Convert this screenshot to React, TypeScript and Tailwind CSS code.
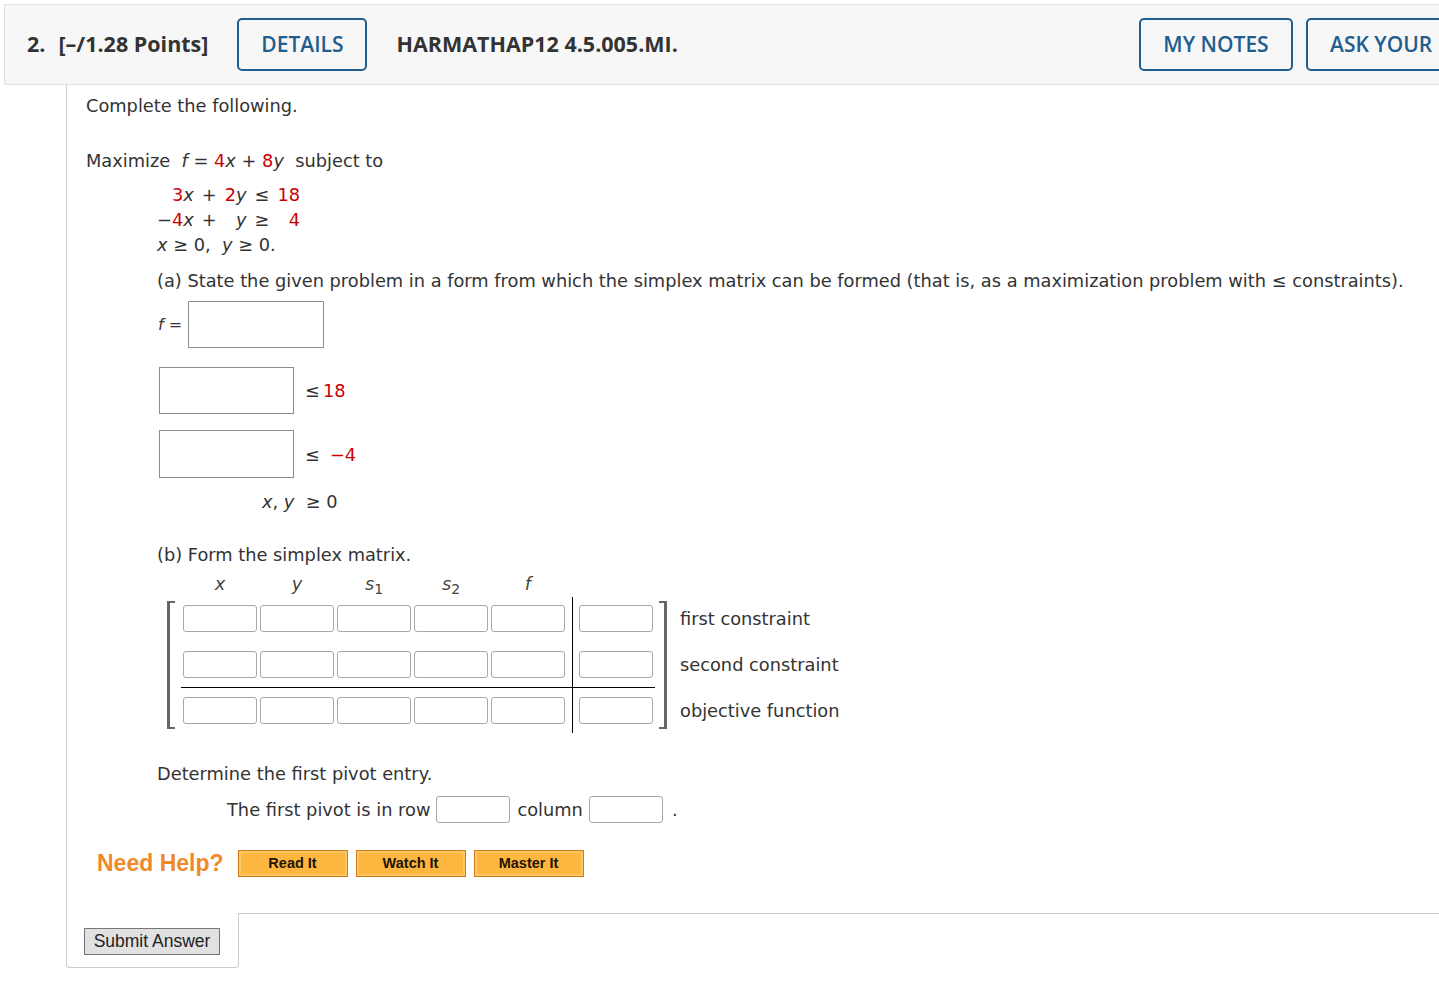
const Num = ({ children }: { children: React.ReactNode }) => (
  <span className="text-[#cc0000]">{children}</span>
);

const V = ({ children }: { children: React.ReactNode }) => (
  <i className="italic">{children}</i>
);

const Box = ({ w = 135, h = 46 }: { w?: number; h?: number }) => (
  <div
    className="border border-[#8c8c8c] bg-white"
    style={{ width: w, height: h }}
  />
);

const Cell = () => (
  <div className="w-[74px] h-[27px] border border-[#a8a8a8] rounded-[3px] bg-white" />
);

const Row = () => (
  <div className="flex gap-[3px]">
    <Cell />
    <Cell />
    <Cell />
    <Cell />
    <Cell />
  </div>
);

const HeaderButton = ({ label, className }: { label: string; className: string }) => (
  <div
    className={
      "h-[53px] flex items-center border-2 border-[#1f5e8e] rounded-[5px] text-[#1f5e8e] text-[21px] font-semibold " +
      className
    }
  >
    {label}
  </div>
);

const HelpButton = ({ label }: { label: string }) => (
  <div className="w-[110px] h-[27px] flex items-center justify-center bg-[#fdb640] border border-[#d07a1a] shadow-[inset_0_0_0_2px_#fcc763] text-[14.5px] font-bold text-[#1f1400]">
    {label}
  </div>
);

export default function App() {
  return (
    <div className="w-[1439px] h-[984px] overflow-hidden bg-white">
      {/* question header */}
      <div className="ml-[4px] mt-[4px] w-[1547px] h-[81px] bg-[#f7f7f7] border border-[#e0e0e0] flex items-center pl-[22px] pr-[14px] font-['Open_Sans',sans-serif] text-[#333]">
        <span className="text-[21.5px] font-bold">2.</span>
        <span className="ml-[13px] text-[21.5px] font-bold">[–/1.28 Points]</span>
        <HeaderButton label="DETAILS" className="ml-[29px] w-[130px] justify-center" />
        <span className="ml-[29px] text-[21.5px] font-bold">HARMATHAP12 4.5.005.MI.</span>
        <div className="ml-auto flex gap-[13px]">
          <HeaderButton label="MY NOTES" className="w-[154px] justify-center" />
          <HeaderButton label="ASK YOUR" className="w-[230px] justify-start pl-[22px]" />
        </div>
      </div>

      {/* question body */}
      <div className="ml-[66px] border-l border-[#cccccc] pl-[19px] pt-[8px] font-['DejaVu_Sans',Verdana,sans-serif] text-[17.8px] leading-[25px] text-[#333]">
        <p>Complete the following.</p>

        <p className="mt-[30px]">
          Maximize&nbsp; <V>f</V> = <Num>4</Num>
          <V>x</V> + <Num>8</Num>
          <V>y</V>&nbsp; subject to
        </p>

        <div className="ml-[71px] mt-[9px]">
          <div className="inline-grid grid-cols-[auto_auto_auto_auto_auto] gap-x-[8px] justify-items-end">
            <span>
              <Num>3</Num>
              <V>x</V>
            </span>
            <span>+</span>
            <span>
              <Num>2</Num>
              <V>y</V>
            </span>
            <span>≤</span>
            <Num>18</Num>

            <span>
              −<Num>4</Num>
              <V>x</V>
            </span>
            <span>+</span>
            <V>y</V>
            <span>≥</span>
            <Num>4</Num>

            <span className="col-span-5 justify-self-start">
              <V>x</V> ≥ 0,&nbsp; <V>y</V> ≥ 0.
            </span>
          </div>

          <p className="mt-[11px]">
            (a) State the given problem in a form from which the simplex matrix can be formed (that is, as a
            maximization problem with ≤ constraints).
          </p>

          <div className="mt-[8px] flex items-center">
            <span className="ml-[1px] text-[16px]">
              <V>f</V> =
            </span>
            <div className="ml-[6px]">
              <Box w={136} h={47} />
            </div>
          </div>

          <div className="ml-[2px] mt-[19px] flex items-center">
            <Box w={135} h={47} />
            <span className="ml-[11px]">
              ≤<span className="ml-[3px]"><Num>18</Num></span>
            </span>
          </div>

          <div className="ml-[2px] mt-[16px] flex items-center">
            <Box w={135} h={48} />
            <span className="ml-[11px]">
              ≤<span className="ml-[10px]"><Num>−4</Num></span>
            </span>
          </div>

          <p className="ml-[105px] mt-[11px]">
            <V>x</V>, <V>y</V>&nbsp; ≥ 0
          </p>

          <p className="mt-[28px]">(b) Form the simplex matrix.</p>

          {/* column labels */}
          <div className="ml-[26px] mt-[4px] grid grid-cols-[repeat(5,74px)] gap-x-[3px] h-[26px] leading-[26px] text-[#444]">
            <span className="text-center">
              <V>x</V>
            </span>
            <span className="text-center">
              <V>y</V>
            </span>
            <span className="text-center">
              <V>s</V>
              <span className="text-[14px] relative top-[4px]">1</span>
            </span>
            <span className="text-center">
              <V>s</V>
              <span className="text-[14px] relative top-[4px]">2</span>
            </span>
            <span className="text-center">
              <V>f</V>
            </span>
          </div>

          {/* simplex matrix */}
          <div className="ml-[10px] flex items-center">
            <div className="w-[8px] h-[128px] border-l-[3px] border-y-2 border-[#666]" />
            <div className="ml-[6px] flex">
              <div className="pl-[2px] pr-[7px] pt-[8px] pb-[9px] flex flex-col">
                <Row />
                <div className="mt-[19px]">
                  <Row />
                </div>
                <div className="mt-[9px] -ml-[2px] -mr-[7px] pl-[2px] pr-[7px] pt-[9px] border-t border-black">
                  <Row />
                </div>
              </div>
              <div className="border-l border-black pl-[6px] pr-[2px] pt-[8px] pb-[9px] flex flex-col">
                <Cell />
                <div className="mt-[19px]">
                  <Cell />
                </div>
                <div className="mt-[9px] -ml-[6px] -mr-[2px] pl-[6px] pr-[2px] pt-[9px] border-t border-black">
                  <Cell />
                </div>
              </div>
            </div>
            <div className="ml-[4px] w-[8px] h-[128px] border-r-[3px] border-y-2 border-[#666]" />
            <div className="ml-[13px] self-stretch pt-[8px] flex flex-col gap-[19px]">
              <div className="h-[27px] flex items-center">first constraint</div>
              <div className="h-[27px] flex items-center">second constraint</div>
              <div className="h-[27px] flex items-center">objective function</div>
            </div>
          </div>

          <p className="mt-[28px]">Determine the first pivot entry.</p>

          <div className="ml-[70px] mt-[10px] flex items-center">
            <span>The first pivot is in row</span>
            <div className="ml-[6px]">
              <Cell />
            </div>
            <span className="ml-[7px]">column</span>
            <div className="ml-[6px]">
              <Cell />
            </div>
            <span className="ml-[9px]">.</span>
          </div>
        </div>

        {/* help */}
        <div className="ml-[11px] mt-[27px] flex items-center font-['Liberation_Sans',Arial,sans-serif] pb-[36px]">
          <span className="text-[23px] font-bold text-[#ee8a2a] leading-[27px]">Need Help?</span>
          <div className="ml-[14px] flex gap-[8px]">
            <HelpButton label="Read It" />
            <HelpButton label="Watch It" />
            <HelpButton label="Master It" />
          </div>
        </div>
      </div>

      {/* footer tab */}
      <div className="ml-[66px] flex items-start">
        <div className="w-[173px] border-l border-r border-b border-[#cccccc] rounded-b-[4px] pl-[17px] pt-[15px] pb-[12px]">
          <div className="w-[136px] h-[27px] flex items-center justify-center bg-[#e1e1e1] border border-[#767676] font-['Liberation_Sans',Arial,sans-serif] text-[17.5px] text-[#222]">
            Submit Answer
          </div>
        </div>
        <div className="flex-1 border-t border-[#cccccc]" />
      </div>
    </div>
  );
}
